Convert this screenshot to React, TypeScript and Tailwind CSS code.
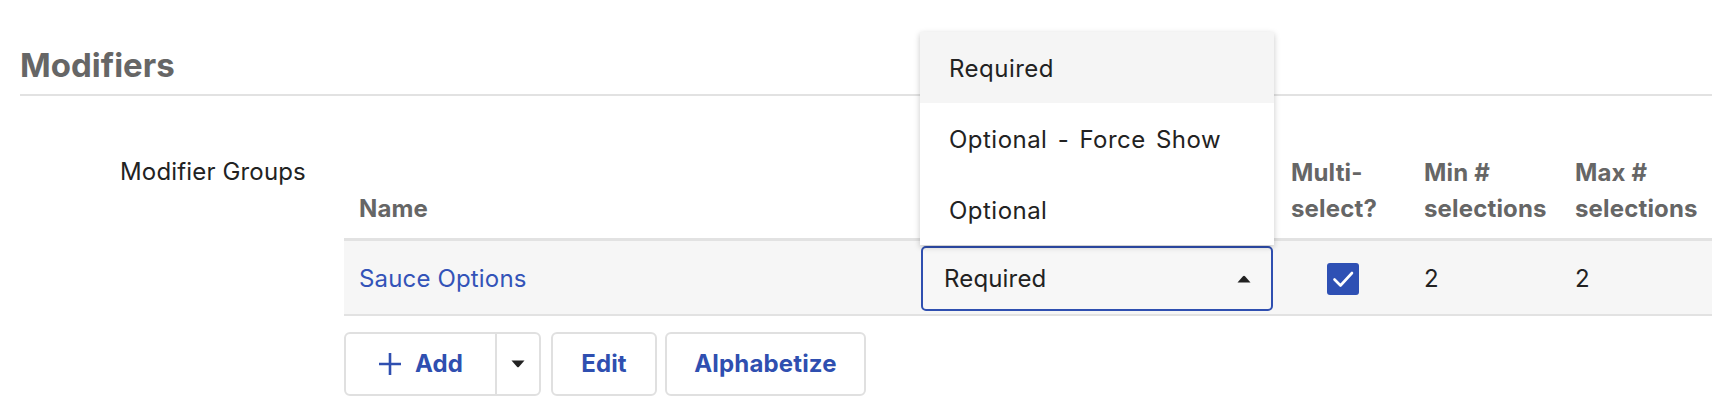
import { useState } from "react";

const options = ["Required", "Optional - Force Show", "Optional"];

function Caret({ up }: { up?: boolean }) {
  return (
    <svg width="16" height="8" viewBox="0 0 16 8" className={up ? "" : "rotate-180"}>
      <path d="M1.5 7.5 L7 1.2 Q8 0.2 9 1.2 L14.5 7.5 Z" fill="#222" />
    </svg>
  );
}

export default function App() {
  const [value] = useState("Required");
  const cols = "grid grid-cols-[562px_370px_133px_151px_152px]";

  return (
    <div className="min-h-screen bg-white pl-[20px] pr-[22px] pt-[45px] font-['Inter',sans-serif] tracking-[0.01em] text-[#222]">
      <div className="border-b-2 border-[#e2e2e2] pb-[8px]">
        <h1 className="text-[33px] font-bold leading-[41px] tracking-normal text-[#666]">Modifiers</h1>
      </div>

      <div className="flex pt-[50px]">
        <div className="w-[324px] shrink-0 pl-[100px] pt-[8px] text-[24px] leading-[36px]">
          Modifier Groups
        </div>

        <div className="flex-1">
          {/* header */}
          <div className={`${cols} border-b-[3px] border-[#e2e2e2] pt-[9px] text-[24px] font-bold leading-[36px] text-[#666]`}>
            <div className="flex items-end px-[15px] pb-[11px]">Name</div>
            <div className="px-[15px] pb-[11px]"></div>
            <div className="px-[15px] pb-[11px]">
              Multi-
              <br />
              select?
            </div>
            <div className="px-[15px] pb-[11px]">
              Min #
              <br />
              selections
            </div>
            <div className="px-[15px] pb-[11px]">
              Max #
              <br />
              selections
            </div>
          </div>

          {/* row */}
          <div className={`${cols} h-[75px] items-center border-b-2 border-[#e2e2e2] bg-[#f6f6f6] pt-[2px] text-[24px]`}>
            <div className="px-[15px] text-[#3353b8]">Sauce Options</div>
            <div className="relative pl-[15px]">
              <div className="absolute bottom-[calc(100%+1px)] left-[14px] w-[354px] bg-white tracking-[0.02em] shadow-[0_2px_6px_rgba(0,0,0,0.22)] [word-spacing:3px]">
                {options.map((o, i) => (
                  <div
                    key={o}
                    className={`flex h-[71px] items-center pl-[29px] pt-[3px] ${i === 0 ? "bg-[#f5f5f5]" : ""}`}
                  >
                    {o}
                  </div>
                ))}
              </div>
              <div className="flex h-[65px] w-[352px] items-center justify-between rounded-[5px] border-2 border-[#2f4fb0] bg-[#f7f7f7] pl-[21px] pr-[19px]">
                <span>{value}</span>
                <Caret up />
              </div>
            </div>
            <div className="flex justify-center">
              <div className="flex h-[32px] w-[32px] items-center justify-center rounded-[3px] bg-[#2e50b4]">
                <svg width="24" height="24" viewBox="0 0 24 24">
                  <path d="M3.5 12.5 L9.5 18.5 L21 6" fill="none" stroke="white" strokeWidth="2.6" strokeLinecap="round" strokeLinejoin="round" />
                </svg>
              </div>
            </div>
            <div className="px-[15px]">2</div>
            <div className="px-[15px]">2</div>
          </div>

          {/* buttons */}
          <div className="mt-[16px] flex text-[24px] font-bold text-[#2f4fb0]">
            <div className="flex h-[64px] rounded-[6px] border-2 border-[#e0e0e0]">
              <button className="flex w-[151px] items-center justify-center gap-[13px] border-r-2 border-[#e0e0e0]">
                <svg width="24" height="24" viewBox="0 0 24 24">
                  <path d="M12 1 V23 M1 12 H23" stroke="#2f4fb0" strokeWidth="2.6" />
                </svg>
                <span>Add</span>
              </button>
              <button className="flex w-[42px] items-center justify-center">
                <Caret />
              </button>
            </div>
            <button className="ml-[10px] h-[64px] w-[106px] rounded-[6px] border-2 border-[#e0e0e0]">Edit</button>
            <button className="ml-[8px] h-[64px] w-[201px] rounded-[6px] border-2 border-[#e0e0e0]">Alphabetize</button>
          </div>
        </div>
      </div>
    </div>
  );
}
